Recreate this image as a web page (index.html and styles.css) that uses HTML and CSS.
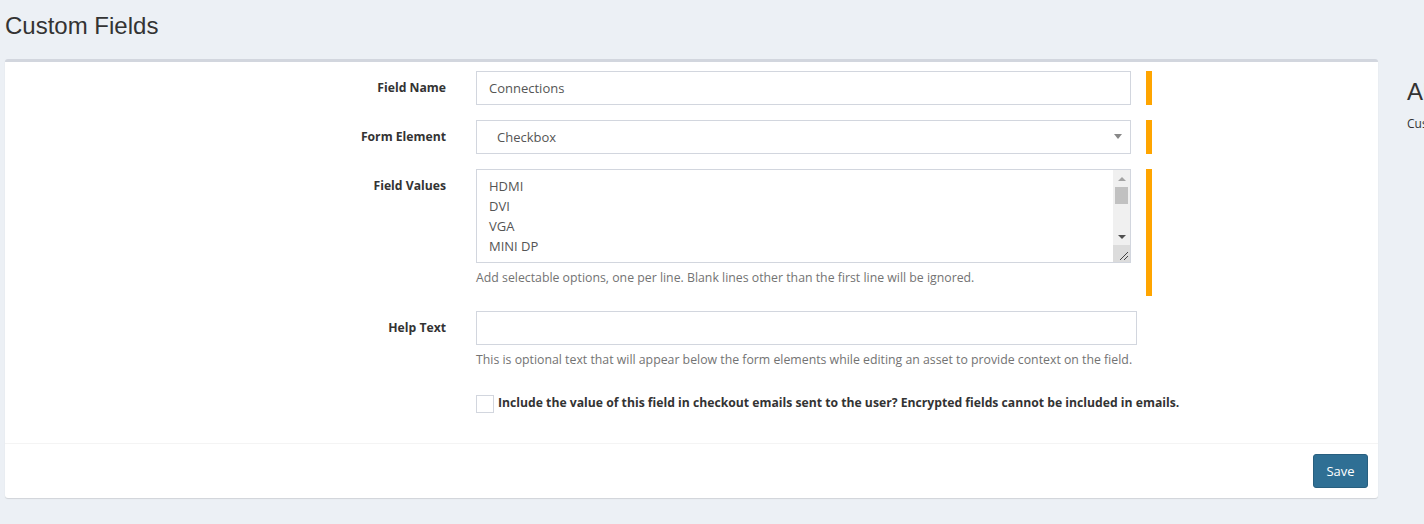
FILE: index.html
```html
<!DOCTYPE html>
<html>
<head>
<meta charset="utf-8">
<link rel="stylesheet" href="styles.css">
</head>
<body>
<h1 class="page-title">Custom Fields</h1>
<div class="layout">
  <div class="box">
    <div class="box-body">
      <div class="form-row">
        <label class="form-label">Field Name</label>
        <div class="form-field">
          <div class="input">Connections</div>
        </div>
        <div class="req-bar"></div>
      </div>
      <div class="form-row">
        <label class="form-label">Form Element</label>
        <div class="form-field">
          <div class="input select"><span class="select-text">Checkbox</span><span class="select-arrow"></span></div>
        </div>
        <div class="req-bar"></div>
      </div>
      <div class="form-row">
        <label class="form-label">Field Values</label>
        <div class="form-field">
          <div class="textarea">
            <div class="textarea-text">HDMI<br>DVI<br>VGA<br>MINI DP<br>DP</div>
            <div class="scrollbar">
              <div class="sb-up"></div>
              <div class="sb-thumb"></div>
              <div class="sb-track"></div>
              <div class="sb-down"></div>
              <div class="sb-corner">
                <svg width="17" height="17" viewBox="0 0 17 17"><path d="M7 15 L15 7 M11 15 L15 11" stroke="#444" stroke-width="1" fill="none"/></svg>
              </div>
            </div>
          </div>
          <p class="help-block">Add selectable options, one per line. Blank lines other than the first line will be ignored.</p>
        </div>
        <div class="req-bar"></div>
      </div>
      <div class="form-row">
        <label class="form-label">Help Text</label>
        <div class="form-field wide">
          <div class="input"></div>
          <p class="help-block">This is optional text that will appear below the form elements while editing an asset to provide context on the field.</p>
        </div>
      </div>
      <div class="form-row">
        <div class="form-label"></div>
        <div class="checkbox-row">
          <span class="checkbox"></span>
          <span class="checkbox-label">Include the value of this field in checkout emails sent to the user? Encrypted fields cannot be included in emails.</span>
        </div>
      </div>
    </div>
    <div class="box-footer">
      <button class="btn-save">Save</button>
    </div>
  </div>
  <div class="aside">
    <h2 class="aside-title">About Custom Fields</h2>
    <p class="aside-text">Custom fields allow you to add arbitrary attributes to assets.</p>
  </div>
</div>
</body>
</html>
```

FILE: styles.css
```css
html, body {
  margin: 0;
  padding: 0;
}
body {
  background: #ecf0f5;
  width: 1424px;
  height: 524px;
  overflow: hidden;
  font-family: "Open Sans", "Noto Sans", sans-serif;
  color: #333;
}
.page-title {
  margin: 0;
  padding: 12px 0 0 5px;
  height: 35px;
  font-family: "Liberation Sans", Arial, sans-serif;
  font-weight: 400;
  font-size: 24px;
  line-height: 28px;
  color: #333;
}
.layout {
  display: flex;
  align-items: flex-start;
  margin-top: 12px;
  padding-left: 5px;
}
.box {
  flex: 0 0 1373px;
  background: #fff;
  border-top: 3px solid #d2d6de;
  border-radius: 3px;
  box-shadow: 0 1px 1px rgba(0,0,0,0.12);
}
.box-body {
  padding: 9px 0 30px 0;
}
.form-row {
  display: flex;
  align-items: flex-start;
  margin-bottom: 15px;
}
.form-row:last-child {
  margin-bottom: 0;
}
.form-label {
  flex: 0 0 441px;
  text-align: right;
  font-weight: 700;
  font-size: 12.2px;
  padding-top: 9px;
  line-height: 15px;
  color: #333;
}
.form-field {
  margin-left: 30px;
  width: 655px;
}
.form-field.wide {
  width: 661px;
}
.req-bar {
  margin-left: 15px;
  width: 6px;
  align-self: stretch;
  background: #ffa500;
}
.input {
  box-sizing: border-box;
  height: 34px;
  border: 1px solid #d2d6de;
  padding: 0 12px;
  font-size: 13px;
  line-height: 33px;
  color: #555;
}
.select {
  display: flex;
  justify-content: space-between;
  align-items: center;
  padding-left: 20px;
  padding-right: 8px;
}
.select-arrow {
  width: 0;
  height: 0;
  border-left: 4px solid transparent;
  border-right: 4px solid transparent;
  border-top: 5px solid #888;
  margin-top: -2px;
}
.textarea {
  box-sizing: border-box;
  height: 94px;
  border: 1px solid #d2d6de;
  display: flex;
}
.textarea-text {
  flex: 1;
  overflow: hidden;
  padding: 6px 12px 0 12px;
  font-size: 13px;
  line-height: 20px;
  color: #555;
}
.scrollbar {
  flex: 0 0 17px;
  display: flex;
  flex-direction: column;
  background: #f0f0f0;
}
.sb-up, .sb-down {
  height: 17px;
  display: flex;
  align-items: center;
  justify-content: center;
}
.sb-up::after {
  content: "";
  border-left: 4px solid transparent;
  border-right: 4px solid transparent;
  border-bottom: 4px solid #a3a3a3;
}
.sb-down::after {
  content: "";
  border-left: 4px solid transparent;
  border-right: 4px solid transparent;
  border-top: 4px solid #505050;
}
.sb-thumb {
  height: 17px;
  margin: 0 2px;
  background: #c1c1c1;
}
.sb-track {
  flex: 1;
}
.sb-corner {
  height: 17px;
  background: #dcdcdc;
}
.sb-corner svg {
  display: block;
}
.help-block {
  margin: 5px 0 8px 0;
  font-size: 12.3px;
  line-height: 20px;
  color: #737373;
}
.checkbox-row {
  margin-left: 30px;
  display: flex;
  align-items: center;
  padding-top: 2px;
}
.checkbox {
  box-sizing: border-box;
  width: 18px;
  height: 18px;
  border: 1px solid #d2d6de;
  background: #fff;
}
.checkbox-label {
  margin-left: 4px;
  margin-top: -3px;
  font-size: 12.2px;
  font-weight: 700;
  color: #333;
  white-space: nowrap;
}
.box-footer {
  border-top: 1px solid #f4f4f4;
  padding: 10px;
  display: flex;
  justify-content: flex-end;
}
.btn-save {
  box-sizing: border-box;
  height: 34px;
  width: 55px;
  background: #2f6f94;
  border: 1px solid #285f7f;
  border-radius: 3px;
  color: #fff;
  font-family: "Open Sans", "Noto Sans", sans-serif;
  font-size: 13px;
  padding: 0;
}
.aside {
  margin-left: 29px;
  white-space: nowrap;
  padding-top: 3px;
}
.aside-title {
  margin: 16px 0 0 0;
  font-family: "Liberation Sans", Arial, sans-serif;
  font-weight: 400;
  font-size: 24px;
  line-height: 28px;
  color: #333;
}
.aside-text {
  margin: 9px 0 0 0;
  font-size: 12px;
  color: #333;
}
```
